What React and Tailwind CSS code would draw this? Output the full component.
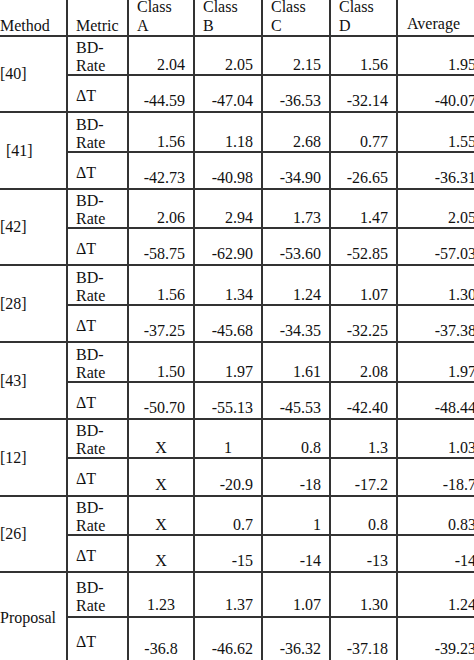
import React from 'react';

const COLS = ['w-[66px]', 'w-[59px]', 'w-[64px]', 'w-[66px]', 'w-[66px]', 'w-[65px]', 'w-[86px]'];

// value: string, or [string, 'c'] to centre it in the cell
const BLOCKS = [
  { method: '[40]', h: ['h-[37px]', 'h-[35px]'], bd: ['2.04', '2.05', '2.15', '1.56', '1.95'], dt: ['-44.59', '-47.04', '-36.53', '-32.14', '-40.07'] },
  { method: '[41]', indent: true, h: ['h-[38px]', 'h-[35px]'], bd: ['1.56', '1.18', '2.68', '0.77', '1.55'], dt: ['-42.73', '-40.98', '-34.90', '-26.65', '-36.31'] },
  { method: '[42]', h: ['h-[37px]', 'h-[35px]'], bd: ['2.06', '2.94', '1.73', '1.47', '2.05'], dt: ['-58.75', '-62.90', '-53.60', '-52.85', '-57.03'] },
  { method: '[28]', h: ['h-[38px]', 'h-[35px]'], bd: ['1.56', '1.34', '1.24', '1.07', '1.30'], dt: ['-37.25', '-45.68', '-34.35', '-32.25', '-37.38'] },
  { method: '[43]', h: ['h-[38px]', 'h-[35px]'], bd: ['1.50', '1.97', '1.61', '2.08', '1.97'], dt: ['-50.70', '-55.13', '-45.53', '-42.40', '-48.44'] },
  { method: '[12]', h: ['h-[37px]', 'h-[36px]'], bd: [['X', 'c'], ['1', 'c'], '0.8', '1.3', '1.03'], dt: [['X', 'c'], '-20.9', '-18', '-17.2', '-18.7'] },
  { method: '[26]', h: ['h-[37px]', 'h-[35px]'], bd: [['X', 'c'], '0.7', '1', '0.8', '0.83'], dt: [['X', 'c'], '-15', '-14', '-13', '-14'] },
  { method: 'Proposal', h: ['h-[43px]', 'h-[44px]'], last: true, bd: [['1.23', 'c'], '1.37', '1.07', '1.30', '1.24'], dt: [['-36.8', 'c'], '-46.62', '-36.32', '-37.18', '-39.23'] },
];

function ValueCell({ value, width, pad }) {
  const [text, align] = Array.isArray(value) ? value : [value, 'r'];
  return (
    <div className={`${width} bg-white flex items-end leading-[18px] ${pad} ${align === 'c' ? 'justify-center' : 'justify-end pr-2'}`}>
      {text}
    </div>
  );
}

function Block({ block }) {
  const pad = block.last ? 'pb-[2px]' : 'pb-0';
  return (
    <div className="flex gap-[2px]">
      <div className={`${COLS[0]} bg-white flex items-center leading-[18px] ${block.indent ? 'pl-[6px]' : 'pl-0'}`}>
        {block.method}
      </div>
      <div className="flex flex-col gap-[2px]">
        <div className={`flex gap-[2px] ${block.h[0]}`}>
          <div className={`${COLS[1]} bg-white flex flex-col justify-end pl-2 leading-[17.5px] ${pad}`}>
            <span>BD-</span>
            <span>Rate</span>
          </div>
          {block.bd.map((v, i) => (
            <ValueCell key={i} value={v} width={COLS[i + 2]} pad={pad} />
          ))}
        </div>
        <div className={`flex gap-[2px] ${block.h[1]}`}>
          <div className={`${COLS[1]} bg-white flex items-center pl-2 pt-[4px] leading-[18px]`}>ΔT</div>
          {block.dt.map((v, i) => (
            <ValueCell key={i} value={v} width={COLS[i + 2]} pad={block.last ? 'pb-[4px]' : 'pb-px'} />
          ))}
        </div>
      </div>
    </div>
  );
}

export default function App() {
  return (
    <div className="w-[474px] h-[660px] overflow-hidden bg-white text-[16px] text-[#111] font-['Liberation_Serif',_'Times_New_Roman',_serif]">
      <div className="-mt-[8px] w-[484px] flex flex-col gap-[2px] bg-[#333]">
        <div className="flex gap-[2px] h-[43px]">
          <div className={`${COLS[0]} bg-white flex items-end leading-[19px]`}>Method</div>
          <div className={`${COLS[1]} bg-white flex items-end pl-2 leading-[19px]`}>Metric</div>
          {['A', 'B', 'C', 'D'].map((c, i) => (
            <div key={c} className={`${COLS[i + 2]} bg-white flex flex-col justify-end pl-2 leading-[19px]`}>
              <span>Class</span>
              <span>{c}</span>
            </div>
          ))}
          <div className={`${COLS[6]} bg-white flex items-end pl-[9px] pb-[2px] leading-[19px]`}>Average</div>
        </div>
        {BLOCKS.map(b => (
          <Block key={b.method} block={b} />
        ))}
      </div>
    </div>
  );
}
